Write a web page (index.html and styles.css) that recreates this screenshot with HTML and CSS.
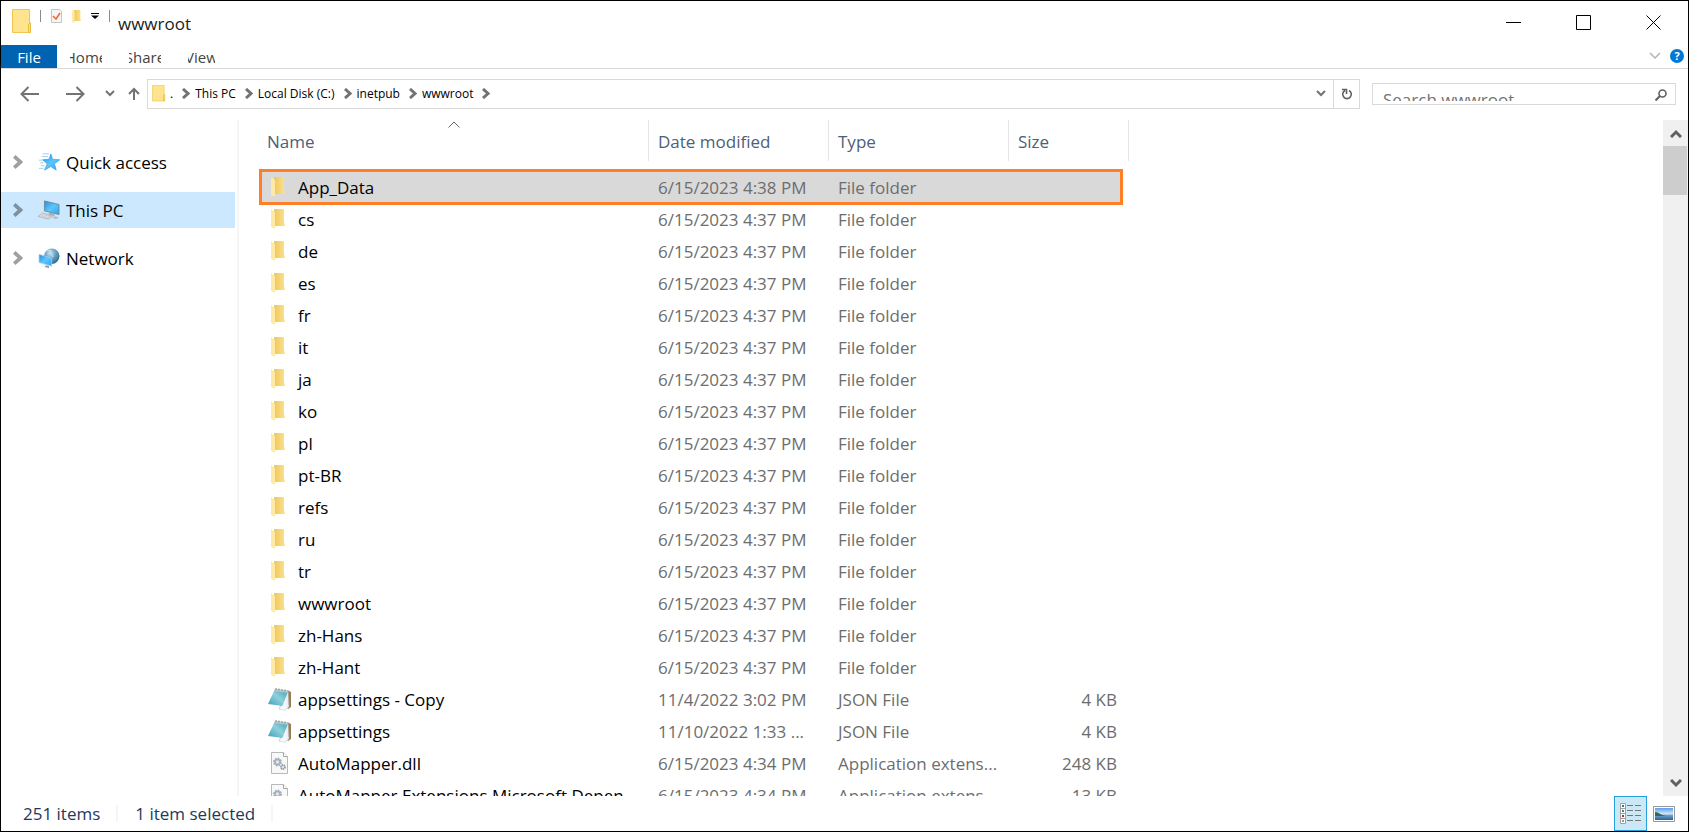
FILE: index.html
```
<!DOCTYPE html>
<html lang="en">
<head>
    <meta charset="UTF-8">
    <meta name="viewport" content="width=device-width, initial-scale=1.0">
    <title>wwwroot</title>
    <link rel="stylesheet" href="styles.css">
</head>
<body>
    <!-- Shared icons -->
    <svg class="sprite" aria-hidden="true">
        <defs>
            <linearGradient id="gold" x1="0" y1="0" x2="1" y2="0"><stop offset="0" stop-color="#efc75e"/><stop offset="1" stop-color="#fce28c"/></linearGradient>
            <linearGradient id="sky" x1="0" y1="0" x2="1" y2="1"><stop offset="0" stop-color="#1d8fe0"/><stop offset="0.5" stop-color="#5cc6ff"/><stop offset="1" stop-color="#2aa4f4"/></linearGradient>
            <linearGradient id="teal" x1="0" y1="1" x2="1" y2="0"><stop offset="0" stop-color="#35a0b8"/><stop offset="0.5" stop-color="#8fd0da"/><stop offset="1" stop-color="#3d9fb5"/></linearGradient>
            <radialGradient id="globe" cx="0.4" cy="0.3" r="0.8"><stop offset="0" stop-color="#d2e9f3"/><stop offset="0.4" stop-color="#6fa9c5"/><stop offset="1" stop-color="#1f5f86"/></radialGradient>
            <linearGradient id="photo" x1="0" y1="0" x2="0" y2="1"><stop offset="0" stop-color="#5a9cf2"/><stop offset="0.5" stop-color="#d5eafa"/><stop offset="0.6" stop-color="#6fa3bd"/><stop offset="1" stop-color="#2464a8"/></linearGradient>
        </defs>
        <symbol id="folder" viewBox="0 0 14 20">
            <path d="M3 0h10v13l1 4H3z" fill="url(#gold)"/>
            <path d="M0 0l4 3v17l-4-2z" fill="#ffe9a6"/>
        </symbol>
        <symbol id="folder-big" viewBox="0 0 20 25">
            <path d="M.5.5h17v23H.5z" fill="#ffe48f" stroke="#eec84c"/>
            <path d="M16.500 23.500v-8l2-1.500v9.500z" fill="#ffe48f" stroke="#e6bc3c"/>
        </symbol>
        <symbol id="chevron" viewBox="0 0 8 11">
            <path d="M1 1l5 4.500L1 10" fill="none" stroke="currentColor" stroke-width="3"/>
        </symbol>
        <symbol id="chevron-down" viewBox="0 0 10 7">
            <path d="M1 1l4 4 4-4" fill="none" stroke="currentColor" stroke-width="2"/>
        </symbol>
        <symbol id="notepad" viewBox="0 0 24 24">
            <path d="M19 3l4 2v15l-3 2z" fill="#9b7c51"/>
            <path d="M20 3l1 17-4 3-6-1L19 4z" fill="#e9eef2" stroke="#a7b0b6" stroke-width="0.6"/>
            <path d="M7 2l13 2-5 15L0 17z" fill="url(#teal)"/>
            <path d="M7 2l13 2-.6 1.800L6.500 4z" fill="#c5c9cb"/>
            <path d="M8 1v2m3-1.500v2m3-1.500v2m3-1.500v2" stroke="#7b8286"/>
            <path d="M11 22l4-4 3-8 1 10-2 3z" fill="#f4f7fa"/>
        </symbol>
        <symbol id="dll" viewBox="0 0 17 22">
            <path d="M.5.5h12l4 4v17H.5z" fill="#f8f8f8" stroke="#b9b9b9"/>
            <path d="M12.500.5v4h4" fill="#fff" stroke="#a6a6a6"/>
            <circle cx="6.500" cy="10" r="3.500" fill="#dfe6ec" stroke="#a3b0bb" stroke-width="2" stroke-dasharray="1.700 1"/>
            <circle cx="6.500" cy="10" r="2.500" fill="none" stroke="#a3b0bb" stroke-width="1.500"/>
            <circle cx="12" cy="15" r="2" fill="#e9edf0" stroke="#8d9ba8" stroke-width="1.800" stroke-dasharray="1.300 0.500"/>
        </symbol>
    </svg>

    <div class="window">
        <header class="titlebar">
            <svg class="app-icon"><use href="#folder-big"/></svg>
            <div class="quick-tools">
                <span class="tool-line"></span>
                <button class="tool" aria-label="Properties"><svg width="11" height="14" viewBox="0 0 11 14"><path d="M.5.5h8l2 2v11H.5z" fill="#f6f6f6" stroke="#c4c4c4"/><path d="M2 7l3 3 4-6" fill="none" stroke="#f0693a" stroke-width="1.600"/></svg></button>
                <button class="tool" aria-label="New folder"><svg width="9" height="13" viewBox="0 0 14 20"><use href="#folder"/></svg></button>
                <button class="tool" aria-label="Customize toolbar"><svg width="8" height="6" viewBox="0 0 8 6"><path d="M0 0h8v1H0zM0 2.500h8L4 6z"/></svg></button>
                <span class="tool-line"></span>
            </div>
            <h1 class="title">wwwroot</h1>
            <div class="window-controls">
                <button aria-label="Minimize"><svg width="15" height="15"><path d="M0 7.500h15" stroke="#000"/></svg></button>
                <button aria-label="Maximize"><svg width="15" height="15"><path d="M.5.5h14v14H.5z" fill="none" stroke="#000"/></svg></button>
                <button aria-label="Close"><svg width="15" height="15"><path d="M.5.500l14 14M14.500.5l-14 14" stroke="#000"/></svg></button>
            </div>
        </header>

        <nav class="ribbon">
            <button class="tab tab-file">File</button>
            <button class="tab">Home</button>
            <button class="tab">Share</button>
            <button class="tab tab-view">View</button>
            <div class="ribbon-end">
                <button class="expand" aria-label="Expand ribbon"><svg width="12" height="8" viewBox="0 0 12 8"><path d="M1 1l5 5 5-5" fill="none" stroke="#b4b4b4" stroke-width="1.500"/></svg></button>
                <button class="help" aria-label="Help">?</button>
            </div>
        </nav>

        <div class="navbar">
            <div class="history">
                <button aria-label="Back"><svg width="19" height="16" viewBox="0 0 19 16"><path d="M19 8H2M8.500 1L1.500 8l7 7" fill="none" stroke="#737373" stroke-width="2"/></svg></button>
                <button aria-label="Forward"><svg width="19" height="16" viewBox="0 0 19 16"><path d="M0 8h17M10.500 1l7 7-7 7" fill="none" stroke="#737373" stroke-width="2"/></svg></button>
                <button aria-label="Recent locations"><svg width="10" height="7"><use href="#chevron-down"/></svg></button>
                <button aria-label="Up"><svg width="12" height="13" viewBox="0 0 12 13"><path d="M6 13V2M1 7l5-5 5 5" fill="none" stroke="#737373" stroke-width="2"/></svg></button>
            </div>
            <div class="address">
                <svg class="address-icon"><use href="#folder-big"/></svg>
                <span class="dot">.</span>
                <svg class="sep"><use href="#chevron"/></svg>
                <a href="#">This PC</a>
                <svg class="sep"><use href="#chevron"/></svg>
                <a href="#">Local Disk (C:)</a>
                <svg class="sep"><use href="#chevron"/></svg>
                <a href="#">inetpub</a>
                <svg class="sep"><use href="#chevron"/></svg>
                <a href="#">wwwroot</a>
                <svg class="sep"><use href="#chevron"/></svg>
                <button class="address-drop" aria-label="Previous locations"><svg width="10" height="7"><use href="#chevron-down"/></svg></button>
                <button class="refresh" aria-label="Refresh"><svg width="12" height="12" viewBox="0 0 12 12"><path d="M8 2.500a4.300 4.300 0 1 1-4 0M1 1.500h4.500V6" fill="none" stroke="#606060" stroke-width="1.600"/></svg></button>
            </div>
            <div class="search">
                <div class="search-clip"><input type="text" placeholder="Search wwwroot" aria-label="Search wwwroot"></div>
                <svg width="12" height="12" viewBox="0 0 12 12"><circle cx="7.500" cy="4.500" r="3.500" fill="none" stroke="#606060" stroke-width="1.600"/><path d="M5 7l-4.500 4.500" stroke="#606060" stroke-width="2"/></svg>
            </div>
        </div>

        <main class="content">
            <aside class="sidebar">
                <a class="place" href="#">
                    <svg class="arrow"><use href="#chevron"/></svg>
                    <svg class="place-icon" viewBox="0 0 24 22"><path d="M14 2l2 6 8 .5-6 4.500 2 7-6-4-7 4 3-7-5-4.500 7-.5z" fill="url(#sky)" stroke="#238fd8" stroke-width="0.600"/><path d="M5 2h7M4 5h7M1 9h4M2 12h4M3 15h4M1 18h5" stroke="#8fcdf2"/></svg>
                    Quick access
                </a>
                <a class="place active" href="#">
                    <svg class="arrow"><use href="#chevron"/></svg>
                    <svg class="place-icon" viewBox="0 0 24 22"><path d="M7 1l16 4v11L7 12z" fill="url(#sky)" stroke="#76848e"/><path d="M13 14l5 1v3l-7-2z" fill="#a7adb2"/><path d="M5 14l11 4-5 3-11-3z" fill="#dfe3e5" stroke="#9ea5aa" stroke-width="0.700"/><path d="M3 17l9 3M5 15.500l9 3" stroke="#a9b0b5" stroke-dasharray="1 1"/><path d="M18 18l5 1-3 2-4-1z" fill="#b4babe"/></svg>
                    This PC
                </a>
                <a class="place" href="#">
                    <svg class="arrow"><use href="#chevron"/></svg>
                    <svg class="place-icon" viewBox="0 0 24 22"><circle cx="15" cy="9" r="8.500" fill="url(#globe)"/><path d="M10 3c3-1 5 0 4 2s3 2 2 5" fill="none" stroke="#b9dbe9" stroke-width="1.500"/><path d="M1 7l14 4v9L1 16z" fill="url(#sky)" stroke="#b5d3e4" stroke-width="0.800"/><path d="M9 19l3 1v2l-5-1z" fill="#8d989f"/></svg>
                    Network
                </a>
            </aside>

            <section class="files">
                <table class="file-table">
                    <colgroup><col><col class="col-date"><col class="col-type"><col class="col-size"></colgroup>
                    <thead>
                        <tr>
                            <th><button class="name-head">Name<svg class="sort" width="12" height="7" viewBox="0 0 12 7"><path d="M.5 6.500l5.500-5.500 5.500 5.500" fill="none" stroke="#666"/></svg></button></th>
                            <th><button>Date modified</button></th>
                            <th><button>Type</button></th>
                            <th><button class="size-head">Size</button></th>
                        </tr>
                    </thead>
                    <tbody>
                        <tr class="selected"><td><svg class="folder"><use href="#folder"/></svg>App_Data</td><td>6/15/2023 4:38 PM</td><td>File folder</td><td></td></tr>
                        <tr><td><svg class="folder"><use href="#folder"/></svg>cs</td><td>6/15/2023 4:37 PM</td><td>File folder</td><td></td></tr>
                        <tr><td><svg class="folder"><use href="#folder"/></svg>de</td><td>6/15/2023 4:37 PM</td><td>File folder</td><td></td></tr>
                        <tr><td><svg class="folder"><use href="#folder"/></svg>es</td><td>6/15/2023 4:37 PM</td><td>File folder</td><td></td></tr>
                        <tr><td><svg class="folder"><use href="#folder"/></svg>fr</td><td>6/15/2023 4:37 PM</td><td>File folder</td><td></td></tr>
                        <tr><td><svg class="folder"><use href="#folder"/></svg>it</td><td>6/15/2023 4:37 PM</td><td>File folder</td><td></td></tr>
                        <tr><td><svg class="folder"><use href="#folder"/></svg>ja</td><td>6/15/2023 4:37 PM</td><td>File folder</td><td></td></tr>
                        <tr><td><svg class="folder"><use href="#folder"/></svg>ko</td><td>6/15/2023 4:37 PM</td><td>File folder</td><td></td></tr>
                        <tr><td><svg class="folder"><use href="#folder"/></svg>pl</td><td>6/15/2023 4:37 PM</td><td>File folder</td><td></td></tr>
                        <tr><td><svg class="folder"><use href="#folder"/></svg>pt-BR</td><td>6/15/2023 4:37 PM</td><td>File folder</td><td></td></tr>
                        <tr><td><svg class="folder"><use href="#folder"/></svg>refs</td><td>6/15/2023 4:37 PM</td><td>File folder</td><td></td></tr>
                        <tr><td><svg class="folder"><use href="#folder"/></svg>ru</td><td>6/15/2023 4:37 PM</td><td>File folder</td><td></td></tr>
                        <tr><td><svg class="folder"><use href="#folder"/></svg>tr</td><td>6/15/2023 4:37 PM</td><td>File folder</td><td></td></tr>
                        <tr><td><svg class="folder"><use href="#folder"/></svg>wwwroot</td><td>6/15/2023 4:37 PM</td><td>File folder</td><td></td></tr>
                        <tr><td><svg class="folder"><use href="#folder"/></svg>zh-Hans</td><td>6/15/2023 4:37 PM</td><td>File folder</td><td></td></tr>
                        <tr><td><svg class="folder"><use href="#folder"/></svg>zh-Hant</td><td>6/15/2023 4:37 PM</td><td>File folder</td><td></td></tr>
                        <tr><td><svg class="notepad"><use href="#notepad"/></svg>appsettings - Copy</td><td>11/4/2022 3:02 PM</td><td>JSON File</td><td>4 KB</td></tr>
                        <tr><td><svg class="notepad"><use href="#notepad"/></svg>appsettings</td><td>11/10/2022 1:33 ...</td><td>JSON File</td><td>4 KB</td></tr>
                        <tr><td><svg class="dll"><use href="#dll"/></svg>AutoMapper.dll</td><td>6/15/2023 4:34 PM</td><td>Application extens...</td><td>248 KB</td></tr>
                        <tr><td><svg class="dll"><use href="#dll"/></svg>AutoMapper.Extensions.Microsoft.Depen...</td><td>6/15/2023 4:34 PM</td><td>Application extens...</td><td>13 KB</td></tr>
                    </tbody>
                </table>
            </section>

            <div class="scrollbar">
                <button aria-label="Scroll up"><svg width="12" height="9" viewBox="0 0 12 9"><path d="M1 8l5-5 5 5" fill="none" stroke="#606060" stroke-width="3"/></svg></button>
                <div class="thumb"></div>
                <button class="scroll-down" aria-label="Scroll down"><svg width="12" height="9" viewBox="0 0 12 9"><path d="M1 1l5 5 5-5" fill="none" stroke="#606060" stroke-width="3"/></svg></button>
            </div>
        </main>

        <footer class="statusbar">
            <span class="status">251 items</span>
            <span class="status">1 item selected</span>
            <div class="views">
                <button class="view active" aria-label="Details"><svg width="21" height="21" viewBox="0 0 21 21"><path d="M.5.5h5v20h-5zM.5 5.500h5M.5 10.500h5M.5 15.500h5" fill="#fff" stroke="#a0a0a0"/><path d="M7 2.500h6m2 0h6M7 7.500h6m2 0h6M7 12.500h6m2 0h6M7 17.500h6m2 0h6" stroke="#777"/><path d="M2 2h2v2H2z" fill="#3272a8"/><path d="M2 7h2v2H2z" fill="#5a8c3c"/><path d="M2 12h2v2H2z" fill="#c3281c"/><path d="M2 17h2v2H2z" fill="#7fa99b"/></svg></button>
                <button class="view" aria-label="Large icons"><svg width="22" height="16" viewBox="0 0 22 16"><path d="M.5.5h21v15H.5z" fill="#fff" stroke="#999"/><path d="M2 2h18v12H2z" fill="url(#photo)"/><path d="M2 6c4 0 5 3 11 4H2z" fill="#386854"/></svg></button>
            </div>
        </footer>
    </div>
</body>
</html>
```

FILE: styles.css
```
* {
    box-sizing: border-box;
}
body {
    margin: 0;
    font-family: "Open Sans", "Noto Sans", sans-serif;
    font-size: 17px;
    color: #000;
}
button {
    border: none;
    background: none;
    padding: 0;
    font: inherit;
    color: inherit;
}
a {
    color: inherit;
    text-decoration: none;
}
svg {
    display: block;
    flex: none;
}
.sprite {
    position: absolute;
    width: 0;
    height: 0;
}
.window {
    display: flex;
    flex-direction: column;
    height: 100vh;
    border: 1px solid #000;
    background: #fff;
    overflow: hidden;
}

/* Title bar */
.titlebar {
    display: flex;
    align-items: flex-start;
    height: 44px;
    padding: 8px 27px 0 11px;
}
.app-icon {
    width: 20px;
    height: 25px;
}
.quick-tools {
    display: flex;
    align-items: center;
    gap: 10px;
    height: 14px;
    margin-left: 8px;
}
.tool-line {
    width: 1px;
    height: 12px;
    background: #8a8a8a;
}
.title {
    margin: 3px 0 0 8px;
    font-size: 17px;
    font-weight: normal;
    line-height: 24px;
    color: #222;
}
.window-controls {
    display: flex;
    gap: 55px;
    margin: 6px 0 0 auto;
}

/* Ribbon tabs */
.ribbon {
    display: flex;
    height: 24px;
    border-bottom: 1px solid #dadada;
    font-size: 15px;
    color: #444;
}
.tab {
    display: flex;
    justify-content: center;
    align-items: center;
    width: 32px;
    margin-right: 27px;
    overflow: hidden;
}
.tab-file {
    width: 56px;
    margin-right: 13px;
    background: #0063b1;
    color: #fff;
}
.tab-view {
    width: 27px;
}
.ribbon-end {
    display: flex;
    align-items: center;
    gap: 9px;
    margin-left: auto;
    padding: 0 4px 2px 0;
}
.help {
    width: 14px;
    height: 14px;
    border-radius: 50%;
    background: #0078d7;
    color: #fff;
    font-size: 11px;
    font-weight: bold;
    line-height: 14px;
}

/* Navigation row */
.navbar {
    display: flex;
    align-items: center;
    height: 51px;
    padding: 0 12px 2px 0;
    color: #737373;
}
.history {
    display: flex;
    align-items: center;
    width: 146px;
    padding-left: 19px;
}
.history button + button {
    margin-left: 27px;
}
.history button:nth-child(3) {
    margin-left: 20px;
}
.history button:nth-child(4) {
    margin-left: 13px;
}
.address {
    display: flex;
    flex: 1;
    align-items: center;
    height: 30px;
    border: 1px solid #d9d9d9;
    font-size: 12px;
}
.address a {
    margin: 0 9px 0 5px;
    color: #000;
}
.address-icon {
    width: 14px;
    height: 17px;
    margin-left: 4px;
}
.dot {
    margin: 0 9px 0 4px;
    color: #000;
}
.sep {
    width: 8px;
    height: 11px;
}
.address-drop {
    margin: 0 7px 0 auto;
}
.refresh {
    display: flex;
    justify-content: center;
    align-items: center;
    width: 26px;
    height: 28px;
    border-left: 1px solid #d9d9d9;
}
.search {
    display: flex;
    width: 304px;
    height: 22px;
    margin-left: 12px;
    padding: 0 8px 0 10px;
    border: 1px solid #d9d9d9;
}
.search svg {
    margin-top: 5px;
}
.search-clip {
    flex: 1;
    height: 17px;
    overflow: hidden;
}
.search input {
    width: 100%;
    height: 32px;
    padding: 0;
    border: none;
    outline: none;
    background: none;
    font: inherit;
}
.search input::placeholder {
    color: #737373;
}

/* Main area */
.content {
    display: flex;
    flex: 1;
    min-height: 0;
}
.sidebar {
    display: flex;
    flex-direction: column;
    gap: 12px;
    width: 238px;
    padding: 24px 2px 0 0;
    border-right: 2px solid #f5f5f5;
}
.place {
    display: flex;
    align-items: center;
    height: 36px;
    padding-left: 12px;
}
.place.active {
    background: #cce8ff;
}
.arrow {
    width: 10px;
    height: 14px;
    margin-right: 15px;
    color: #a0a0a0;
}
.active .arrow {
    color: #7f919e;
}
.place-icon {
    width: 22px;
    height: 20px;
    margin-right: 6px;
}
.files {
    flex: 1;
    padding-left: 22px;
    overflow: hidden;
}

/* File list */
.file-table {
    width: 860px;
    table-layout: fixed;
    border-collapse: collapse;
}
.col-date,
.col-type {
    width: 180px;
}
.col-size {
    width: 112px;
}
.file-table th {
    padding: 0 0 10px;
}
.file-table th button {
    display: block;
    width: 100%;
    height: 41px;
    padding: 2px 0 0 9px;
    border-right: 1px solid #e5e5e5;
    font-weight: normal;
    text-align: left;
    color: #4c607a;
}
.file-table th .name-head {
    position: relative;
    padding-left: 6px;
}
.file-table th .size-head {
    width: 120px;
}
.sort {
    position: absolute;
    top: 1px;
    left: 50%;
    margin-left: -7px;
}
.file-table td {
    height: 32px;
    padding: 2px 0 0 9px;
    line-height: 24px;
    white-space: nowrap;
    color: #6d6d6d;
}
.file-table td:first-child {
    display: flex;
    align-items: center;
    color: #000;
}
.file-table td:last-child {
    padding-right: 4px;
    text-align: right;
}
.selected {
    background: #d9d9d9;
    outline: 3px solid #ff7f27;
    outline-offset: -1px;
}
.folder {
    width: 14px;
    height: 20px;
    margin: 0 13px 2px 1px;
}
.notepad {
    width: 24px;
    height: 24px;
    margin: 0 6px 2px -2px;
}
.dll {
    width: 17px;
    height: 22px;
    margin: 0 10px 2px 1px;
}

/* Scrollbar */
.scrollbar {
    display: flex;
    flex-direction: column;
    width: 25px;
    background: #f0f0f0;
}
.scrollbar button {
    display: flex;
    justify-content: center;
    align-items: center;
    height: 26px;
}
.thumb {
    width: 24px;
    height: 49px;
    background: #cdcdcd;
}
.scrollbar .scroll-down {
    margin-top: auto;
}

/* Status bar */
.statusbar {
    display: flex;
    align-items: center;
    height: 35px;
    padding-left: 5px;
    color: #1e395b;
}
.status {
    padding: 0 16px 0 17px;
    border-right: 2px solid #f5f5f5;
    line-height: 17px;
}
.views {
    display: flex;
    height: 35px;
    margin-left: auto;
    padding-right: 8px;
}
.view {
    display: flex;
    justify-content: center;
    align-items: center;
    width: 33px;
}
.view.active {
    border: 1px solid #26a0da;
    background: #cbe8f6;
}
```
